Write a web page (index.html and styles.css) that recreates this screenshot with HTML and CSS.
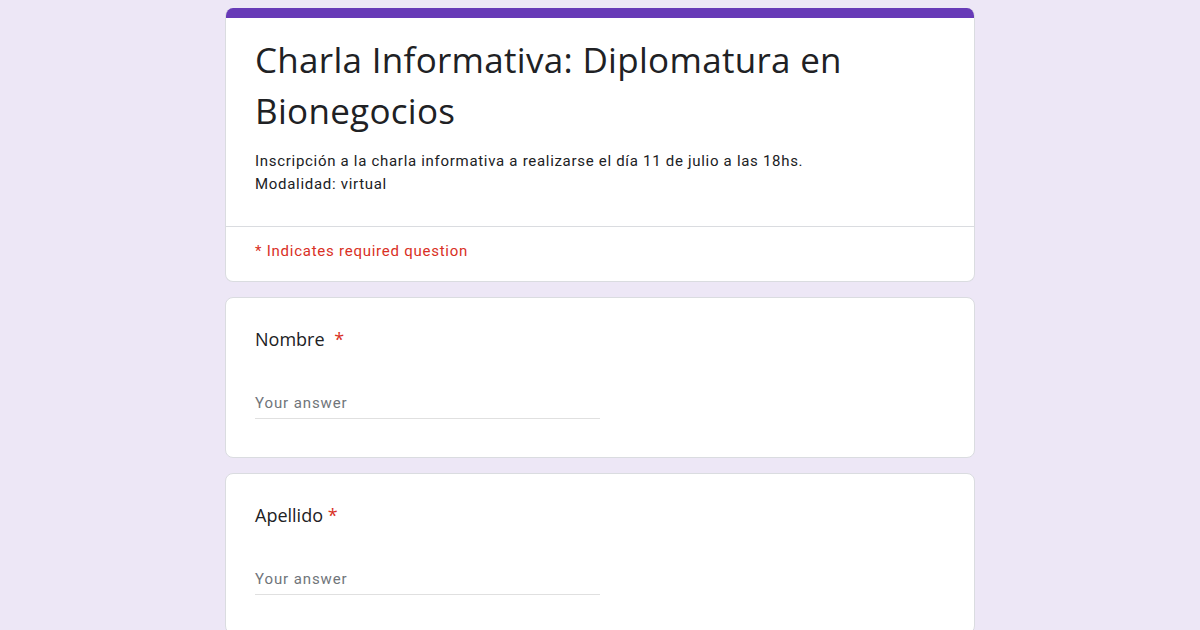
FILE: index.html
```html
<!DOCTYPE html>
<html lang="es">
<head>
<meta charset="utf-8">
<title>Charla Informativa: Diplomatura en Bionegocios</title>
<link rel="stylesheet" href="styles.css">
</head>
<body>
<main class="form">
  <section class="card header-card">
    <div class="accent"></div>
    <div class="header-body">
      <h1 class="title">Charla Informativa: Diplomatura en Bionegocios</h1>
      <p class="desc">Inscripción a la charla informativa a realizarse el día 11 de julio a las 18hs.<br>Modalidad: virtual</p>
    </div>
    <div class="required-note">* Indicates required question</div>
  </section>

  <section class="card question">
    <div class="label">Nombre <span class="star star-gap">*</span></div>
    <div class="answer">Your answer</div>
  </section>

  <section class="card question">
    <div class="label">Apellido <span class="star">*</span></div>
    <div class="answer">Your answer</div>
  </section>
</main>
</body>
</html>
```

FILE: styles.css
```css
html, body {
  margin: 0;
  padding: 0;
  background: #ede7f6;
  font-family: Roboto, "Liberation Sans", sans-serif;
  color: #202124;
}
body {
  height: 630px;
  overflow: hidden;
}
.form {
  width: 750px;
  margin: 0 auto;
  padding-top: 8px;
  display: flex;
  flex-direction: column;
  gap: 15px;
}
.card {
  background: #fff;
  border: 1px solid #dadce0;
  border-radius: 8px;
  box-sizing: border-box;
}
.header-card {
  overflow: hidden;
  border-top: none;
}
.accent {
  height: 10px;
  background: #673ab7;
}
.header-body {
  padding: 16px 29px 30px;
  border-bottom: 1px solid #dadce0;
}
.title {
  margin: 0;
  font-family: "Open Sans", Roboto, sans-serif;
  font-weight: 400;
  font-size: 35px;
  line-height: 51px;
  letter-spacing: 0.3px;
  color: #202124;
}
.desc {
  margin: 14px 0 0;
  font-size: 15px;
  line-height: 23px;
  letter-spacing: 0.7px;
  color: #202124;
}
.required-note {
  padding: 13px 29px 19px;
  font-size: 15px;
  line-height: 22px;
  letter-spacing: 0.75px;
  color: #d93025;
}
.question {
  padding: 29px 29px 38px;
}
.label {
  font-family: "Open Sans", Roboto, sans-serif;
  font-size: 18px;
  line-height: 24px;
  color: #202124;
}
.star {
  color: #d93025;
}
.star-gap {
  margin-left: 5px;
}
.answer {
  margin-top: 41px;
  width: 345px;
  font-size: 15px;
  line-height: 22px;
  letter-spacing: 0.9px;
  color: #70757a;
  border-bottom: 1px solid #e0e0e0;
  padding-bottom: 4px;
}
```
